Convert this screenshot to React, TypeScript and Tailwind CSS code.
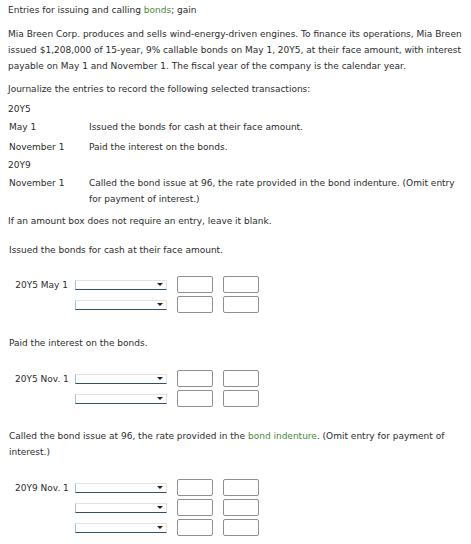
import React from "react";

const Select = () => (
  <div className="relative h-[10px] w-[92px] border border-b-[#2f4f6a] border-l-[#a9c0d6] border-r-[#e2e2e2] border-t-[#e2e2e2] bg-white">
    <span className="absolute right-[3px] top-[2px] h-0 w-0 border-x-[3px] border-t-[3px] border-x-transparent border-t-[#222]" />
  </div>
);

const Amount = () => (
  <div className="h-[17px] w-[36px] rounded-[2px] border border-[#8f8f8f] bg-white" />
);

const EntryRows = ({ label, rows }: { label: string; rows: number }) => (
  <div className="flex flex-col gap-[3px] pl-[7px]">
    {Array.from({ length: rows }).map((_, i) => (
      <div key={i} className="flex items-center">
        <div className="w-[53px] whitespace-nowrap text-right">{i === 0 ? label : ""}</div>
        <div className="ml-[7px]">
          <Select />
        </div>
        <div className="ml-[10px]">
          <Amount />
        </div>
        <div className="ml-[10px]">
          <Amount />
        </div>
      </div>
    ))}
  </div>
);

export default function App() {
  return (
    <div
      className="min-h-[544px] w-[471px] bg-white px-2 pt-[2px] text-[9px] leading-[16px] text-[#2b2b2b]"
      style={{ fontFamily: "'DejaVu Sans', Verdana, sans-serif" }}
    >
      <p>
        Entries for issuing and calling <span className="text-[#4a8a3a]">bonds</span>; gain
      </p>

      <p className="mt-[8px]">
        Mia Breen Corp. produces and sells wind-energy-driven engines. To finance its operations, Mia Breen issued
        $1,208,000 of 15-year, 9% callable bonds on May 1, 20Y5, at their face amount, with interest payable on May 1
        and November 1. The fiscal year of the company is the calendar year.
      </p>

      <p className="mt-[7px]">Journalize the entries to record the following selected transactions:</p>

      <div className="mt-[4px]">
        <div>20Y5</div>
        <div className="mt-[2px] grid grid-cols-[80px_1fr] gap-y-[4px] pl-[1px]">
          <div>May 1</div>
          <div>Issued the bonds for cash at their face amount.</div>
          <div>November 1</div>
          <div>Paid the interest on the bonds.</div>
        </div>
        <div className="mt-[2px]">20Y9</div>
        <div className="mt-[2px] grid grid-cols-[80px_1fr] pl-[1px]">
          <div>November 1</div>
          <div>Called the bond issue at 96, the rate provided in the bond indenture. (Omit entry for payment of interest.)</div>
        </div>
      </div>

      <p className="mt-[6px]">If an amount box does not require an entry, leave it blank.</p>

      <p className="mt-[13px] pl-[1px]">Issued the bonds for cash at their face amount.</p>
      <div className="mt-[18px]">
        <EntryRows label="20Y5 May 1" rows={2} />
      </div>

      <p className="mt-[22px] pl-[1px]">Paid the interest on the bonds.</p>
      <div className="mt-[19px]">
        <EntryRows label="20Y5 Nov. 1" rows={2} />
      </div>

      <p className="mt-[21px] pl-[1px]">
        Called the bond issue at 96, the rate provided in the <span className="text-[#4a8a3a]">bond indenture</span>.
        (Omit entry for payment of interest.)
      </p>
      <div className="mt-[19px]">
        <EntryRows label="20Y9 Nov. 1" rows={3} />
      </div>
    </div>
  );
}
